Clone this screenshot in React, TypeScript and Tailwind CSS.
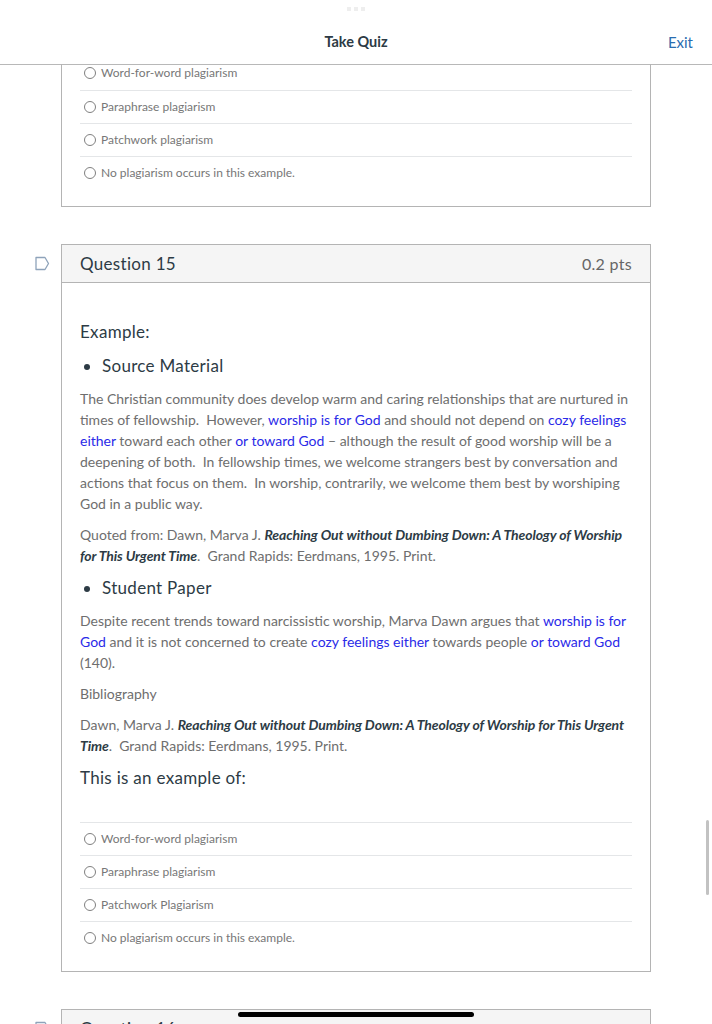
import React from 'react';

const linkCls = 'text-[#2a2ae8]';
const bodyCls = 'mt-[10px] text-[14px] leading-[21px] text-[#6e6e6e]';
const headCls = 'text-[17px] leading-[24px] tracking-[0.3px] text-[#2d3b45]';
const titleCls = 'font-bold italic tracking-[-0.1px] text-[#2d3b45]';

function Flag() {
  return (
    <svg width="15" height="15" viewBox="0 0 15 15" className="shrink-0">
      <path d="M1 1.5 H10 L13.5 7.5 L10 13.5 H1 Z" fill="none" stroke="#8ea3ba" strokeWidth="1.3" strokeLinejoin="round" />
    </svg>
  );
}

function Option({ label, first }: { label: string; first?: boolean }) {
  return (
    <div
      className={
        first
          ? 'flex items-start h-[26px] leading-[18px]'
          : 'flex items-center h-[33px] border-t border-[#e4e6e8]'
      }
    >
      <span
        className={
          first
            ? 'ml-[4px] mt-[3px] w-[12px] h-[12px] rounded-full border border-[#808080]'
            : 'ml-[4px] w-[12px] h-[12px] rounded-full border border-[#808080]'
        }
      />
      <span className="ml-[5px] text-[12px] text-[#777777]">{label}</span>
    </div>
  );
}

function QuestionHeader({ title, pts }: { title: string; pts: string }) {
  return (
    <div className="flex items-center justify-between h-[38px] px-[18px] bg-[#f5f5f5] border-b border-[#b4b4b4]">
      <span className="text-[17px] tracking-[0.3px] text-[#2d3b45]">{title}</span>
      <span className="text-[16px] tracking-[0.3px] text-[#666666]">{pts}</span>
    </div>
  );
}

export default function App() {
  return (
    <div className="min-h-screen bg-white font-['Lato','Noto_Sans',sans-serif] text-[#2d3b45]">
      <header className="h-[65px] border-b border-[#b8b8b8] bg-white">
        <div className="h-[20px] flex justify-center items-start pt-[7px] gap-[3px]">
          <span className="w-[4px] h-[4px] bg-[#eeeeee]" />
          <span className="w-[4px] h-[4px] bg-[#eeeeee]" />
          <span className="w-[4px] h-[4px] bg-[#eeeeee]" />
        </div>
        <div className="relative h-[44px] flex items-center justify-center">
          <span className="text-[14.5px] font-bold text-[#2d3b45]">Take Quiz</span>
          <span className="absolute right-[19px] text-[15px] text-[#2a6db0]">Exit</span>
        </div>
      </header>

      {/* previous question, scrolled under the header */}
      <div className="mx-[61px] border-x border-b border-[#b4b4b4] px-[18px] pb-[17px] -mt-px">
        <Option first label="Word-for-word plagiarism" />
        <Option label="Paraphrase plagiarism" />
        <Option label="Patchwork plagiarism" />
        <Option label="No plagiarism occurs in this example." />
      </div>

      {/* Question 15 */}
      <div className="flex items-start mt-[37px] pl-[35px]">
        <div className="mt-[12px] w-[26px]">
          <Flag />
        </div>
        <div className="w-[590px] border border-[#b4b4b4]">
          <QuestionHeader title="Question 15" pts="0.2 pts" />
          <div className="px-[18px] pt-[37px] pb-[17px]">
            <p className={headCls}>Example:</p>
            <ul className={'mt-[10px] list-disc pl-[22px] ' + headCls}>
              <li>Source Material</li>
            </ul>
            <p className={bodyCls}>
              The Christian community does develop warm and caring relationships that are nurtured in times of fellowship.{'\u00a0 '}However,{' '}
              <span className={linkCls}>worship is for God</span> and should not depend on{' '}
              <span className={linkCls}>cozy feelings either</span> toward each other{' '}
              <span className={linkCls}>or toward God</span> – although the result of good worship will be a deepening of both.{'\u00a0 '}In fellowship times, we welcome strangers best by conversation and actions that focus on them.{'\u00a0 '}In worship, contrarily, we welcome them best by worshiping God in a public way.
            </p>
            <p className={bodyCls}>
              Quoted from: Dawn, Marva J.{' '}
              <span className={titleCls}>Reaching Out without Dumbing Down: A Theology of Worship for This Urgent Time</span>.{'\u00a0 '}Grand Rapids: Eerdmans, 1995. Print.
            </p>
            <ul className={'mt-[10px] list-disc pl-[22px] ' + headCls}>
              <li>Student Paper</li>
            </ul>
            <p className={bodyCls}>
              Despite recent trends toward narcissistic worship, Marva Dawn argues that{' '}
              <span className={linkCls}>worship is for God</span> and it is not concerned to create{' '}
              <span className={linkCls}>cozy feelings either</span> towards people{' '}
              <span className={linkCls}>or toward God</span> (140).
            </p>
            <p className={bodyCls}>Bibliography</p>
            <p className={bodyCls}>
              Dawn, Marva J.{' '}
              <span className={titleCls}>Reaching Out without Dumbing Down: A Theology of Worship for This Urgent Time</span>.{'\u00a0 '}Grand Rapids: Eerdmans, 1995. Print.
            </p>
            <p className={'mt-[10px] ' + headCls}>This is an example of:</p>
            <div className="mt-[32px] border-t border-[#e4e6e8]">
              <div className="-mt-px">
                <Option label="Word-for-word plagiarism" />
                <Option label="Paraphrase plagiarism" />
                <Option label="Patchwork Plagiarism" />
                <Option label="No plagiarism occurs in this example." />
              </div>
            </div>
          </div>
        </div>
      </div>

      {/* Question 16 */}
      <div className="flex items-start mt-[37px] pl-[35px] pb-[40px]">
        <div className="mt-[12px] w-[26px]">
          <Flag />
        </div>
        <div className="w-[590px] border border-[#b4b4b4]">
          <QuestionHeader title="Question 16" pts="0.2 pts" />
          <div className="h-[200px]" />
        </div>
      </div>

      {/* scroll indicator */}
      <div className="fixed right-[3px] top-[820px] w-[3px] h-[75px] rounded-full bg-[#c2c2c2]" />
      {/* home indicator */}
      <div className="fixed bottom-[7px] left-[238px] w-[236px] h-[5px] rounded-full bg-black" />
    </div>
  );
}
